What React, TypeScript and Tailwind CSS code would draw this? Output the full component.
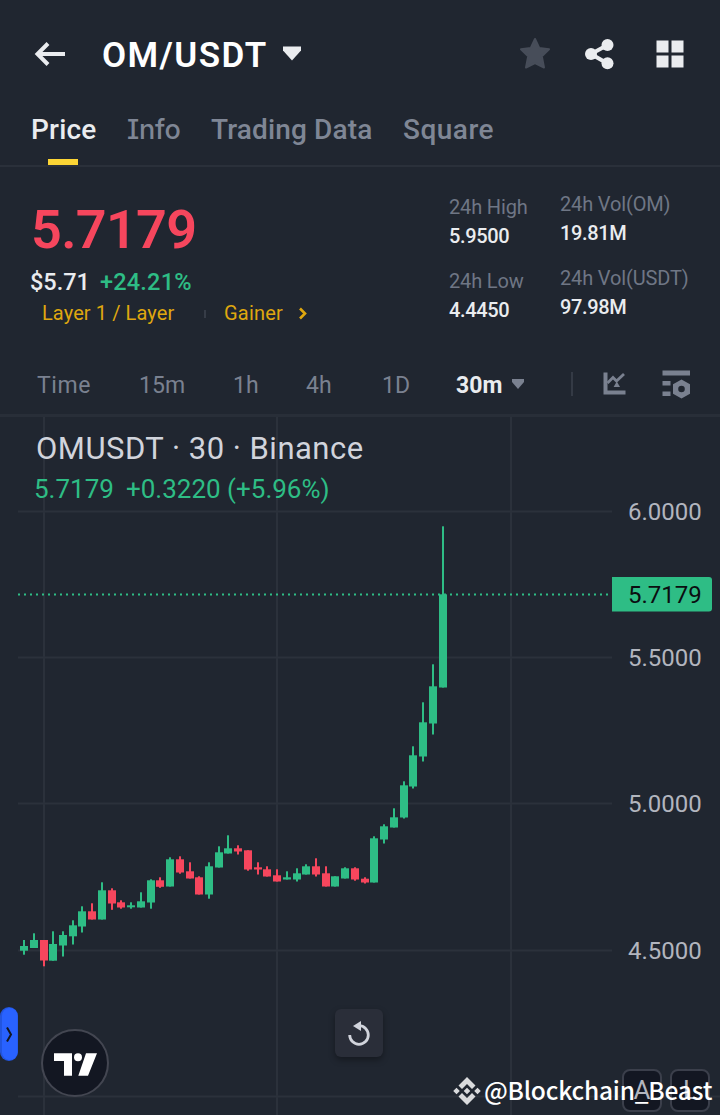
import React from 'react';

type Candle = [x: number, high: number, top: number, bottom: number, low: number, up: boolean];

const candles: Candle[] = [
  [24, 940, 946, 950.7, 954.7, true],
  [34, 933.3, 940, 948, 948, true],
  [44, 940, 940, 960.5, 966.3, false],
  [53, 931.3, 944, 960.7, 960.7, true],
  [63, 931.3, 935, 945.5, 956.5, true],
  [73, 920.3, 925.3, 936.3, 944.5, true],
  [82, 906.3, 911.3, 926.5, 932.5, true],
  [92, 903.3, 911.3, 919.5, 919.5, false],
  [102, 882.3, 890.3, 919.5, 919.5, true],
  [112, 888.3, 890.3, 903.5, 909.8, false],
  [121, 900.3, 902.3, 907.5, 908.7, false],
  [131, 902.3, 905.3, 907.3, 908.7, true],
  [141, 892.3, 901.3, 907.5, 907.5, true],
  [151, 879.3, 880.3, 902.5, 908.7, true],
  [160, 877.3, 880.3, 886.8, 887.8, false],
  [170, 857.3, 859.3, 886.5, 886.5, true],
  [180, 856.3, 859.3, 872.5, 873.7, false],
  [190, 862.3, 871.3, 878.5, 878.5, false],
  [199, 876.3, 877.3, 894.5, 894.5, false],
  [209, 862.3, 866.3, 894.5, 898.7, true],
  [219, 846.3, 852.3, 867.5, 867.5, true],
  [228, 835.3, 848.3, 853.5, 853.5, true],
  [238, 845.3, 848.3, 851.5, 854.5, false],
  [248, 850.3, 850.3, 869.5, 870.7, false],
  [258, 862.3, 867.3, 869.5, 874.5, false],
  [267, 866.3, 869.3, 876.5, 876.5, false],
  [277, 869.3, 875.3, 881.5, 881.5, false],
  [287, 871.3, 877.3, 879.5, 879.5, true],
  [297, 868.3, 873.3, 879.5, 881.5, true],
  [306, 864.3, 866.3, 874.5, 874.5, true],
  [316, 858.3, 866.3, 874.5, 876.5, false],
  [326, 866.3, 873.3, 886.5, 886.5, false],
  [335, 876.3, 876.3, 886.5, 886.5, true],
  [345, 867.3, 868.3, 878.5, 878.5, true],
  [355, 867.3, 868.3, 879.5, 880.7, false],
  [365, 877.3, 878.7, 882.5, 883.5, false],
  [374, 836.3, 838.3, 882.5, 882.5, true],
  [384, 824.3, 826.3, 839.5, 843.5, true],
  [394, 808.3, 817.3, 827.5, 827.5, true],
  [404, 781.3, 785.3, 817.5, 818.5, true],
  [413, 746.3, 755.3, 786.5, 788.5, true],
  [423, 702.3, 722.3, 756.5, 761.5, true],
  [433, 664.3, 686.3, 723.5, 734.5, true],
  [443, 526.3, 594.3, 687.5, 687.5, true],
];

const gridY = [511.5, 657.5, 803.5, 950.5, 1096.5];
const gridX = [44, 277, 511];
const axis = [
  { y: 520, label: '6.0000' },
  { y: 666, label: '5.5000' },
  { y: 812, label: '5.0000' },
  { y: 959, label: '4.5000' },
];

function Header() {
  return (
    <header className="flex h-[108px] items-center pl-[34px] pr-[36px]">
      <svg width="32" height="28" viewBox="0 0 32 28" className="-mt-px shrink-0">
        <path d="M4 14H31M14 3.5L3.5 14L14 24.5" fill="none" stroke="#eaecef" strokeWidth="4" />
      </svg>
      <h1 className="ml-[36px] w-[166px] whitespace-nowrap pt-[3px] text-[35px] font-semibold leading-none tracking-[1.4px] text-white">
        OM/USDT
      </h1>
      <svg width="20" height="16" viewBox="0 0 20 16" className="ml-[14px] shrink-0">
        <path d="M1 0.5H19V4.5L10 14.5L1 4.5Z" fill="#eaecef" />
      </svg>
      <div className="ml-auto flex items-center">
        <svg width="32" height="32" viewBox="0 0 32 32" className="-mt-[2px]">
          <path
            d="M16 2L20.2 11L30 12.3L22.8 19.2L25 30.5L16 26L7 30.5L9.200 19.2L2 12.3L11.800 11Z"
            fill="#474d59"
            stroke="#474d59"
            strokeWidth="2"
            strokeLinejoin="round"
          />
        </svg>
        <svg width="30" height="32" viewBox="0 0 30 32" className="-mt-px ml-[33px]">
          <path d="M23.500 7L7 16L23.500 25.500" fill="none" stroke="#eaecef" strokeWidth="4" />
          <circle cx="23.500" cy="7" r="6" fill="#eaecef" />
          <circle cx="7" cy="16" r="6" fill="#eaecef" />
          <circle cx="23.500" cy="25.300" r="6" fill="#eaecef" />
        </svg>
        <svg width="28" height="28" viewBox="0 0 28 28" className="-mt-px ml-[42px]">
          <path d="M0.500 0.500h12v12h-12zM15.500 0.500h12v12h-12zM0.500 15.500h12v12h-12zM15.500 15.500h12v12h-12z" fill="#eaecef" />
        </svg>
      </div>
    </header>
  );
}

function Tabs() {
  return (
    <nav className="flex h-[59px] border-b-2 border-[#2a303a] pl-[31px] text-[28px] font-medium text-[#7f8695]">
      <div className="flex w-[96px] flex-col">
        <span className="h-[44px] leading-[44px] tracking-[0.2px] text-[#eaecef]">Price</span>
        <span className="ml-[17px] mt-[7px] h-[6px] w-[30px] shrink-0 bg-[#fcd535]" />
      </div>
      <span className="w-[84px] font-['Inter',sans-serif] text-[27px] leading-[44px] tracking-[-0.2px] [font-feature-settings:'cv08']">
        Info
      </span>
      <span className="w-[192px] whitespace-nowrap leading-[44px] tracking-[0.15px]">Trading Data</span>
      <span className="leading-[44px] tracking-[0.5px]">Square</span>
    </nav>
  );
}

function Stat({ label, value }: { label: string; value: string }) {
  return (
    <div className="mb-[17px] whitespace-nowrap text-[20px]">
      <div className="h-[27px] leading-[27px] tracking-[-0.15px] text-[#6f7685]">{label}</div>
      <div className="h-[30px] font-medium leading-[30px] tracking-[-0.35px] text-[#eaecef]">{value}</div>
    </div>
  );
}

function Summary() {
  return (
    <section className="flex h-[190px]">
      <div className="w-[449px] pl-[31px] pt-[30px]">
        <div className="h-[65px] text-[54px] font-semibold leading-[65px] tracking-[-0.7px] text-[#f6465d]">5.7179</div>
        <div className="-ml-px flex h-[42px] items-center text-[23.5px] font-medium">
          <span className="w-[70px] text-[#eaecef]">$5.71</span>
          <span className="tracking-[0.2px] text-[#2ebd85]">+24.21%</span>
        </div>
        <div className="-mt-px flex h-[21px] items-center whitespace-nowrap pl-[11px] text-[20px] leading-[21px] text-[#dfa70f]">
          <span className="w-[162px] tracking-[0.1px]">Layer 1 / Layer</span>
          <span className="h-[8px] w-[2px] bg-[#363c47]" />
          <span className="ml-[18px] w-[75px] tracking-[0.2px]">Gainer</span>
          <svg width="8" height="13" viewBox="0 0 8 13">
            <path d="M1 1.500L6 6.500L1 11.500" fill="none" stroke="#dfa70f" strokeWidth="2.600" />
          </svg>
        </div>
      </div>
      <div className="w-[111px] pt-[27px]">
        <Stat label="24h High" value="5.9500" />
        <Stat label="24h Low" value="4.4450" />
      </div>
      <div className="pt-[24px]">
        <Stat label="24h Vol(OM)" value="19.81M" />
        <Stat label="24h Vol(USDT)" value="97.98M" />
      </div>
    </section>
  );
}

function Intervals() {
  return (
    <nav className="flex h-[57px] items-center whitespace-nowrap pl-[37px] pt-px text-[23px] text-[#7a8190]">
      <span className="w-[102px] tracking-[0.6px]">Time</span>
      <span className="w-[94px] tracking-[0.1px]">15m</span>
      <span className="w-[73px]">1h</span>
      <span className="w-[76px]">4h</span>
      <span className="w-[74px]">1D</span>
      <span className="w-[55px] font-bold text-[#eaecef]">30m</span>
      <svg width="14" height="12" viewBox="0 0 14 12" className="-mt-[4px]">
        <path d="M1 1H13V4L7 11L1 4Z" fill="#7a8190" />
      </svg>
      <span className="-mt-[4px] ml-[46px] h-[24px] w-[2px] bg-[#343a45]" />
      <svg width="24" height="24" viewBox="0 0 24 24" className="-mt-[4px] ml-[30px]">
        <path d="M0.500 0.500H4.500V18.500H22.500V22.500H0.500Z" fill="#7a8190" />
        <path d="M4.500 11L10 5.500L13.500 9L21 2" fill="none" stroke="#7a8190" strokeWidth="2.800" />
        <path d="M13.800 9.500L17 15H10.600Z" fill="#7a8190" />
      </svg>
      <svg width="30" height="30" viewBox="0 0 30 30" className="-mt-[3px] ml-[35px]">
        <path d="M0.500 0.500H28V5.500H0.500ZM0.500 11H8.500V15.500H0.500ZM0.500 21.500H8.500V26H0.500Z" fill="#7a8190" />
        <path
          fillRule="evenodd"
          d="M19.500 9.500L28 14.300V23.700L19.500 28.500L11 23.700V14.300ZM19.500 15.700A3.300 3.300 0 1 0 19.500 22.300A3.300 3.300 0 1 0 19.500 15.700Z"
          fill="#7a8190"
        />
      </svg>
    </nav>
  );
}

function PriceChart() {
  return (
    <svg width="720" height="698" viewBox="0 417 720 698" className="block overflow-visible">
      <g fill="#2b313b">
        {gridX.map((x) => (
          <rect key={x} x={x - 1} y={414} width={2} height={701} />
        ))}
        {gridY.map((y) => (
          <rect key={y} x={18} y={y - 1} width={y > 1000 ? 702 : 594} height={2} />
        ))}
      </g>
      <line x1="18" x2="610" y1="594.5" y2="594.5" stroke="#2ebd85" strokeWidth="2" strokeDasharray="2 4" />
      {candles.map(([x, high, top, bottom, low, up]) => (
        <g key={x} fill={up ? '#2ebd85' : '#f6465d'}>
          <rect x={x - 1} y={high} width={2} height={low - high} />
          <rect x={x - 4} y={top} width={8} height={bottom - top} />
        </g>
      ))}
      <path d="M612 577H709Q712 577 712 580V608.500Q712 611.500 709 611.500H612Z" fill="#2ebd85" />
      <g fontFamily="Roboto, sans-serif" fontSize="24" fill="#b2b5be">
        {axis.map(({ y, label }) => (
          <text key={label} x="628" y={y}>
            {label}
          </text>
        ))}
        <text x="628" y="603" fill="#0b0e11">
          5.7179
        </text>
      </g>
    </svg>
  );
}

function AxisButton({ children }: { children: string }) {
  return (
    <div className="flex h-[43px] w-[40px] items-center justify-center rounded-[8px] border-2 border-[#3b3f4b] bg-[#131722] text-[26px] text-[#b2b5be]">
      {children}
    </div>
  );
}

function Chart() {
  return (
    <section className="relative h-[701px] overflow-hidden border-t-[3px] border-[#282e38]">
      <PriceChart />
      <div className="absolute left-[36px] top-[10px] whitespace-nowrap">
        <div className="h-[42px] text-[31px] leading-[43px] tracking-[0.5px] text-[#d1d4dc]">OMUSDT · 30 · Binance</div>
        <div className="-ml-[2px] flex h-[41px] text-[26px] leading-[41px] text-[#2ebd85]">
          <span className="w-[92px]">5.7179</span>
          <span>+0.3220 (+5.96%)</span>
        </div>
      </div>

      <svg width="18" height="54" viewBox="0 0 18 54" className="absolute left-0 top-[590px]">
        <rect width="18" height="54" rx="9" fill="#2255df" />
        <rect x="2" y="1" width="15.500" height="52" rx="7.750" fill="#2962ff" />
        <path d="M7 20.500L11 27.500L7 34.500" fill="none" stroke="#131722" strokeWidth="2" />
      </svg>

      <svg width="68" height="68" viewBox="41 1029 68 68" className="absolute left-[41px] top-[612px]">
        <circle cx="75" cy="1063" r="33" fill="#131722" stroke="#434651" strokeWidth="2" />
        <path d="M54 1053.300H72V1075.700H64V1061H54ZM86 1053.300H97L88 1075.700H78.300Z" fill="#fff" />
        <circle cx="78" cy="1057.300" r="4" fill="#fff" />
      </svg>

      <div className="absolute left-[335px] top-[592px] flex h-[48px] w-[48px] items-center justify-center rounded-[6px] bg-[#2a2e39] shadow-[0_3px_6px_rgba(0,0,0,0.35)]">
        <svg width="28" height="28" viewBox="0 0 28 28">
          <path d="M4.700 16A9.300 9.300 0 1 0 14 6.700" fill="none" stroke="#d1d4dc" strokeWidth="2.800" />
          <path d="M8 7L16 2V12Z" fill="#d1d4dc" />
        </svg>
      </div>

      <div className="absolute left-[622px] top-[652px] flex gap-[8px]">
        <AxisButton>A</AxisButton>
        <AxisButton>L</AxisButton>
      </div>

      <div className="absolute left-[453px] top-[656px] flex h-[36px] items-center whitespace-nowrap text-white">
        <svg width="28" height="28" viewBox="0 0 28 28" fill="#d9dadc">
          <path d="M14 0L22.500 8.500L19 12L14 7L9 12L5.500 8.500Z" />
          <path d="M14 28L22.500 19.500L19 16L14 21L9 16L5.500 19.500Z" />
          <path d="M14 10.700L17.300 14L14 17.300L10.700 14ZM3.500 10.700L6.800 14L3.500 17.300L0.200 14ZM24.500 10.700L27.800 14L24.500 17.300L21.200 14Z" />
        </svg>
        <span className="-mt-[2px] ml-[3px] font-['Noto_Sans_CJK_SC',sans-serif] text-[24.5px] font-medium leading-[36px] tracking-[-0.2px]">
          @Blockchain_Beast
        </span>
      </div>
    </section>
  );
}

export default function App() {
  return (
    <main className="h-[1115px] w-[720px] overflow-hidden bg-[#202630] font-['Roboto',sans-serif]">
      <Header />
      <Tabs />
      <Summary />
      <Intervals />
      <Chart />
    </main>
  );
}
